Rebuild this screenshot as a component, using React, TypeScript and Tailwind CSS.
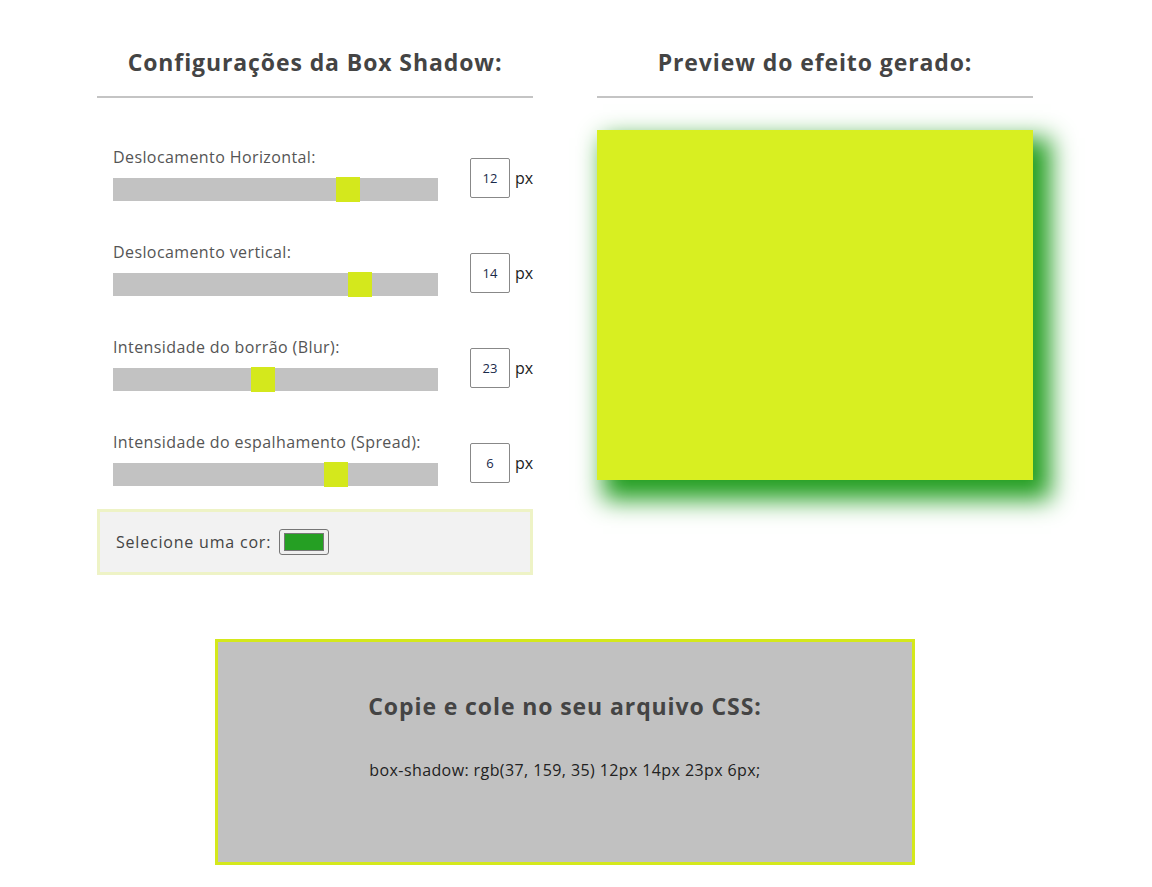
import React from 'react';

interface SliderRow {
  key: 'h' | 'v' | 'blur' | 'spread';
  label: string;
  min: number;
  max: number;
}

const rows: SliderRow[] = [
  { key: 'h', label: 'Deslocamento Horizontal:', min: -25, max: 25 },
  { key: 'v', label: 'Deslocamento vertical:', min: -25, max: 25 },
  { key: 'blur', label: 'Intensidade do borrão (Blur):', min: 0, max: 50 },
  { key: 'spread', label: 'Intensidade do espalhamento (Spread):', min: -15, max: 15 },
];

function hexToRgb(hex: string) {
  const n = parseInt(hex.slice(1), 16);
  return `rgb(${(n >> 16) & 255}, ${(n >> 8) & 255}, ${n & 255})`;
}

export default function App() {
  const [values, setValues] = React.useState({ h: 12, v: 14, blur: 23, spread: 6 });
  const [color, setColor] = React.useState('#259f23');

  const rgb = hexToRgb(color);
  const shadow = `${rgb} ${values.h}px ${values.v}px ${values.blur}px ${values.spread}px`;

  const update = (key: SliderRow['key'], v: number) => setValues(prev => ({ ...prev, [key]: v }));

  return (
    <div className="min-h-[887px] bg-white text-[#444] font-['Open_Sans',sans-serif]">
      <div className="flex gap-16 pl-[97px] pt-[44px]">
        {/* Settings column */}
        <div className="w-[436px]">
          <h2 className="text-center text-[23px] tracking-[0.9px] font-bold leading-[36px] pb-[16px] border-b-2 border-[#c4c4c4]">
            Configurações da Box Shadow:
          </h2>

          <div className="px-4 pt-[49px]">
            {rows.map(row => (
              <div key={row.key} className="flex items-start h-[95px]">
                <div className="w-[325px]">
                  <label className="block text-[16px] tracking-[0.4px] leading-[20px] text-[#555] mb-[11px]">{row.label}</label>
                  <input
                    type="range"
                    min={row.min}
                    max={row.max}
                    value={values[row.key]}
                    onChange={e => update(row.key, Number(e.target.value))}
                    className="block w-[325px] h-[23px] bg-[#c2c2c2] appearance-none outline-none cursor-pointer [&::-webkit-slider-thumb]:appearance-none [&::-webkit-slider-thumb]:w-6 [&::-webkit-slider-thumb]:h-[25px] [&::-webkit-slider-thumb]:bg-[#d4e81c] [&::-webkit-slider-thumb]:border-0"
                  />
                </div>
                <input
                  type="text"
                  value={values[row.key]}
                  onChange={e => update(row.key, Number(e.target.value) || 0)}
                  className="mt-[11px] ml-8 w-10 h-10 border border-[#888] rounded-[2px] text-center text-[13px] text-[#1a2a4a] outline-none"
                />
                <span className="mt-[11px] ml-[5px] leading-10 text-[16px] text-[#222]">px</span>
              </div>
            ))}
          </div>

          <div className="mt-[-18px] h-[66px] flex items-center gap-2 px-4 bg-[#f2f2f2] border-[3px] border-[#eef3c6]">
            <span className="text-[16px] tracking-[0.8px] text-[#444]">Selecione uma cor:</span>
            <input
              type="color"
              value={color}
              onChange={e => setColor(e.target.value)}
              className="w-[50px] h-[26px] px-[2px] py-[1px] border border-[#767676] rounded-[3px] bg-[#efefef] cursor-pointer [&::-webkit-color-swatch-wrapper]:px-[2px] [&::-webkit-color-swatch-wrapper]:py-[2px] [&::-webkit-color-swatch]:border [&::-webkit-color-swatch]:border-[#777] [&::-webkit-color-swatch]:rounded-none"
            />
          </div>
        </div>

        {/* Preview column */}
        <div className="w-[436px]">
          <h2 className="text-center text-[23px] tracking-[0.9px] font-bold leading-[36px] pb-[16px] border-b-2 border-[#c4c4c4]">
            Preview do efeito gerado:
          </h2>
          <div className="mt-[32px] w-[436px] h-[350px] bg-[#d8ef21]" style={{ boxShadow: shadow }}></div>
        </div>
      </div>

      {/* CSS output */}
      <div className="mt-[64px] ml-[215px] w-[700px] h-[226px] bg-[#c1c1c1] border-[3px] border-[#d4e81c] flex flex-col items-center pt-[46px]">
        <h3 className="text-[23px] tracking-[0.9px] font-bold leading-[36px] text-[#444]">Copie e cole no seu arquivo CSS:</h3>
        <p className="mt-[34px] text-[16px] tracking-[0.4px] text-[#222]">box-shadow: {shadow};</p>
      </div>
    </div>
  );
}
